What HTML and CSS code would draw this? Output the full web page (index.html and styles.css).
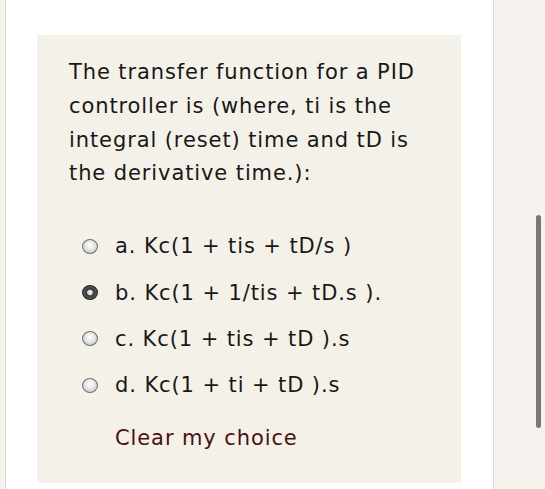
FILE: index.html
```html
<!DOCTYPE html>
<html lang="en">
<head>
<meta charset="utf-8">
<title>Question</title>
<link rel="stylesheet" href="styles.css">
</head>
<body>
<div class="page">
  <div class="edge"></div>
  <main class="panel">
    <section class="card">
      <p class="question">The transfer function for a PID controller is (where, ti is the integral (reset) time and tD is the derivative time.):</p>
      <div class="options">
        <label class="option"><span class="radio"></span><span class="opt-text">a. Kc(1 + tis + tD/s )</span></label>
        <label class="option"><span class="radio checked"></span><span class="opt-text">b. Kc(1 + 1/tis + tD.s ).</span></label>
        <label class="option"><span class="radio"></span><span class="opt-text">c. Kc(1 + tis + tD ).s</span></label>
        <label class="option"><span class="radio"></span><span class="opt-text">d. Kc(1 + ti + tD ).s</span></label>
      </div>
      <a class="clear">Clear my choice</a>
    </section>
  </main>
  <aside class="side"><div class="scrollbar"></div></aside>
</div>
</body>
</html>
```
FILE: styles.css
```css
html, body {
  margin: 0;
  padding: 0;
}
body {
  background: #f6f3ee;
  font-family: "DejaVu Sans", "Open Sans", sans-serif;
  color: #181818;
}
.page {
  display: flex;
  height: 489px;
  overflow: hidden;
}
.edge {
  width: 5px;
  flex: none;
}
.panel {
  width: 487px;
  flex: none;
  background: #ffffff;
  border-left: 1px solid #dcd8d0;
  border-right: 1px solid #dcd8d0;
  padding-top: 35px;
}
.card {
  margin-left: 31px;
  width: 424px;
  height: 448px;
  box-sizing: border-box;
  background: #f4f1e8;
  padding: 21px 16px 0 32px;
}
.question,
.option,
.clear {
  font-size: 21px;
  letter-spacing: 0.9px;
}
.question {
  margin: 0;
  line-height: 33.8px;
}
.options {
  margin-top: 32px;
  display: flex;
  flex-direction: column;
}
.option {
  height: 46.3px;
  display: flex;
  align-items: center;
  padding-left: 13px;
}
.radio {
  width: 16px;
  height: 15px;
  border-radius: 50%;
  box-sizing: border-box;
  border: 1.5px solid #6f6f6f;
  background: radial-gradient(circle at 50% 40%, #ffffff 0%, #e2e2e2 50%, #b5b5b5 100%);
  margin-right: 17px;
  flex: none;
}
.radio.checked {
  border: 1px solid #222;
  background: radial-gradient(circle at 50% 50%, #f4f4f4 0%, #d0d0d0 26%, #3a3a3a 34%, #555 70%, #2a2a2a 100%);
}
.clear {
  display: block;
  margin-top: 14px;
  margin-left: 46px;
  line-height: 33.5px;
  color: #4a1010;
}
.side {
  flex: 1;
  padding-top: 215px;
  padding-left: 42px;
}
.scrollbar {
  width: 5px;
  height: 213px;
  border-radius: 3px;
  background: #7a7774;
}
```
